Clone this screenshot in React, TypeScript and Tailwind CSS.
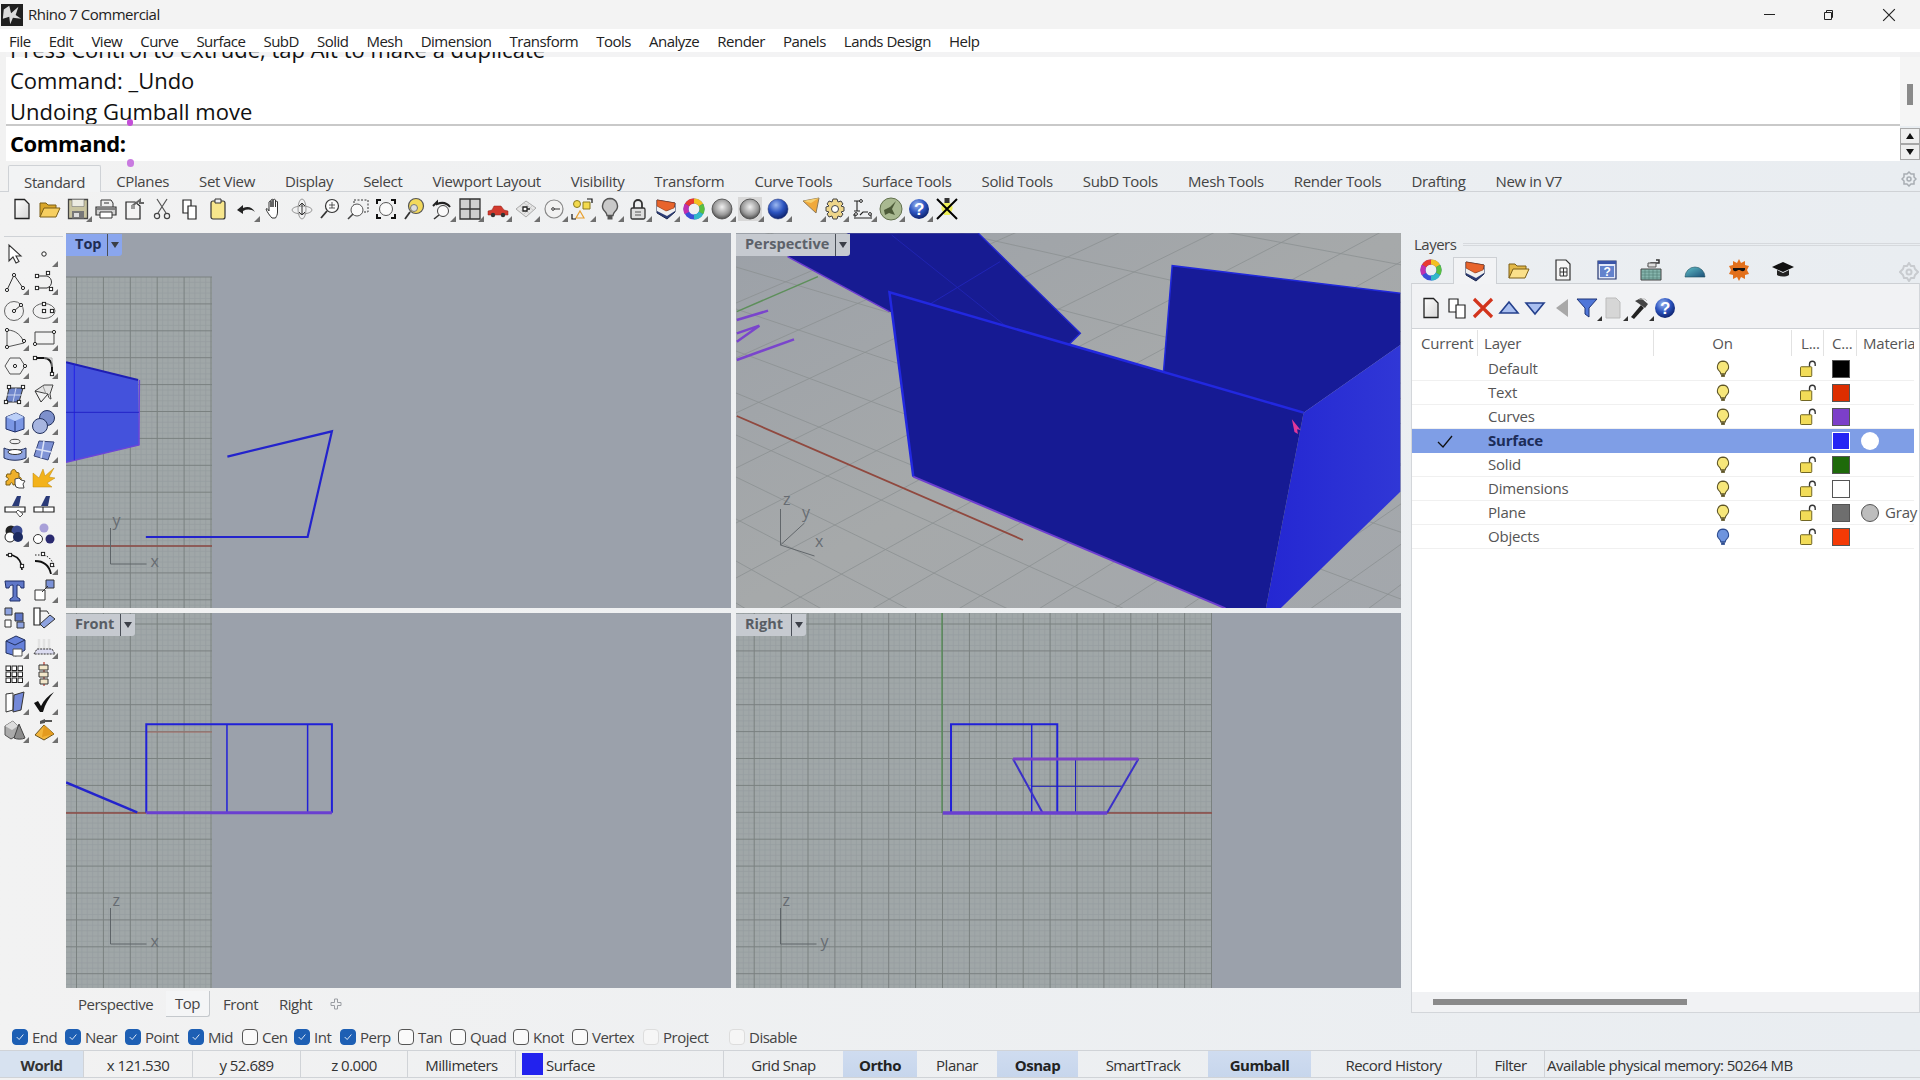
import React from "react";

const z7 = (pts: number[][], ox: number, oy: number) =>
	pts.map(([x, y]) => `${x / 2.306 + ox},${y / 3 + oy}`).join(" ");

// viewport drawings are measured from the left/top of each panel
const top = (pts: number[][]) => z7(pts, -6, -3);
const right = (pts: number[][]) => z7(pts, -7, -3);

function Icon({ children }: { children: React.ReactNode }) {
	return (
		<svg viewBox="0 0 24 24" className="w-[24px] h-[24px]">
			{children}
		</svg>
	);
}

function Tool({ children, fly, cls }: { children: React.ReactNode; fly?: boolean; cls?: string }) {
	return (
		<div className={`relative w-[28px] h-[28px] flex items-center justify-center shrink-0 ${cls ?? ""}`}>
			<Icon>{children}</Icon>
			{fly && (
				<span className="absolute right-[0px] bottom-[1px] w-0 h-0 border-l-[6px] border-l-transparent border-b-[6px] border-b-[#6f6f6f]" />
			)}
		</div>
	);
}

const wheel = (
	<>
		<circle cx="12" cy="12" r="8" fill="none" stroke="#3a4fd8" strokeWidth="5" />
		<path d="M12 4a8 8 0 0 1 7 4" fill="none" stroke="#f4c020" strokeWidth="5" />
		<path d="M19 8a8 8 0 0 1 0 8" fill="none" stroke="#58c040" strokeWidth="5" />
		<path d="M19 16a8 8 0 0 1-7 4" fill="none" stroke="#30b8c8" strokeWidth="5" />
		<path d="M5 8a8 8 0 0 1 7-4" fill="none" stroke="#e83a30" strokeWidth="5" />
		<path d="M5 16a8 8 0 0 1 0-8" fill="none" stroke="#c030b0" strokeWidth="5" />
	</>
);

const layersIcon = (
	<>
		<path d="M3 3l18 3v9l-8 7-10-6z" fill="#2c3d78" stroke="#1c2850" />
		<path d="M3 9l10 5 8-4v4l-8 5-10-5z" fill="#f0f0f0" />
		<path d="M3 3l18 3-1 5-8 3-9-5z" fill="#e8642c" stroke="#a04418" strokeWidth=".6" />
	</>
);

const help = (
	<>
		<circle cx="12" cy="12" r="10" fill="url(#gBlue)" />
		<text x="12" y="18" textAnchor="middle" fontSize="17" fontWeight="700" fill="#fff" fontFamily="Liberation Sans, sans-serif">?</text>
	</>
);

const bulb = (fill: string, line: string) => (
	<>
		<path d="M12 1.5a7.5 7.5 0 0 0-4.8 13.2c1 1 1.8 2.300 1.800 3.800h6c0-1.500.8-2.800 1.800-3.800A7.500 7.500 0 0 0 12 1.500z" fill={fill} stroke={line} strokeWidth="1.400" />
		<path d="M9.500 19h5v3.500h-5z" fill={line} />
	</>
);

const openLock = (
	<>
		<path d="M14 9V5.500a3.800 3.800 0 0 1 7.600 0V8" fill="none" stroke="#333" strokeWidth="1.800" />
		<rect x="2" y="9" width="15" height="13" rx="1" fill="#f2dc58" stroke="#6d6220" strokeWidth="1.300" />
	</>
);

const topTools: { el: React.ReactNode; fly?: boolean; cls?: string }[] = [
	{ el: <path d="M5 2.500h9.500L19 7v14.500H5z" fill="url(#gFace)" stroke="#222" strokeWidth="1.300" /> },
	{
		el: (
			<>
				<path d="M2 20V6h6l2 2h8v3" fill="#d9a62a" stroke="#7c5f16" />
				<path d="M2 20l4-9h16l-4 9z" fill="#f7cf60" stroke="#7c5f16" />
			</>
		),
	},
	{
		el: (
			<>
				<path d="M2.500 2.500h19v19h-19z" fill="#c9c4a0" stroke="#444" strokeWidth="1.300" />
				<path d="M6 2.500h12v7H6z" fill="#ecebe2" stroke="#777" strokeWidth=".6" />
				<path d="M6 14h12v7.500H6z" fill="#777" />
				<path d="M8 16h5v4H8z" fill="#ddd" />
			</>
		),
		fly: true,
	},
	{
		el: (
			<>
				<path d="M7 9V3h10l2 3v4" fill="#eee" stroke="#333" />
				<path d="M2 10h20v8H2z" fill="#d2d2d2" stroke="#333" strokeWidth="1.200" />
				<path d="M6 15h12v6H6z" fill="#fff" stroke="#333" />
				<path d="M3 12h18M10 6h5" stroke="#333" />
			</>
		),
	},
	{
		el: (
			<>
				<path d="M4 5h9l5 4v13H4z" fill="#f4f4f4" stroke="#222" strokeWidth="1.200" />
				<path d="M10 9l8-6v3h4" fill="none" stroke="#666" strokeWidth="2" />
				<path d="M9 8h4v4H9z" fill="#999" />
			</>
		),
	},
	{
		el: (
			<>
				<path d="M7 2l9 14M17 2L8 16" stroke="#555" strokeWidth="1.200" />
				<circle cx="7" cy="19" r="2.600" fill="none" stroke="#444" strokeWidth="1.200" />
				<circle cx="17" cy="19" r="2.600" fill="none" stroke="#444" strokeWidth="1.200" />
			</>
		),
	},
	{
		el: (
			<>
				<path d="M5 3h8v13H5z" fill="#fff" stroke="#222" strokeWidth="1.200" />
				<path d="M10 9h8v13h-8z" fill="#fff" stroke="#222" strokeWidth="1.200" />
			</>
		),
	},
	{
		el: (
			<>
				<rect x="5" y="4" width="14" height="18" rx="2" fill="#f7e68c" stroke="#333" strokeWidth="1.200" />
				<path d="M9 2h6v4H9z" fill="#eee" stroke="#333" />
			</>
		),
	},
	{
		el: <path d="M3 13l6-5v3c5-2 9-1 12 4-4-3-8-3-12-1v3z" fill="#222" />,
		fly: true,
	},
	{
		el: (
			<path
				transform="translate(2 0)"
				d="M8 21c-2-2-5-6-6-9 1-1 2 0 3 2V5c1-1.500 2-1 2 0v5V3c1-1 2-1 2 0v7V3c1-1 2-1 2.500 0v7V5c1-1 2-1 2 0v10c0 3-1 4-2 6z"
				fill="#fff"
				stroke="#333"
				strokeWidth="1"
			/>
		),
	},
	{
		el: (
			<>
				<ellipse cx="12" cy="13" rx="10" ry="4" fill="none" stroke="#999" />
				<ellipse cx="12" cy="12" rx="4" ry="10" fill="none" stroke="#999" />
				<path d="M12 6v12M9 9l3-3 3 3M9 15l3 3 3-3" fill="none" stroke="#333" />
			</>
		),
	},
	{
		el: (
			<>
				<circle cx="14" cy="9" r="6.500" fill="#fafafa" stroke="#333" strokeWidth="1.200" />
				<path d="M9 14l-6 7" stroke="#333" strokeWidth="1.800" />
				<path d="M11 8h6M14 5v6M11 11h6" stroke="#333" strokeWidth=".8" />
			</>
		),
	},
	{
		el: (
			<>
				<path d="M8 3h14v12H8z" fill="none" stroke="#333" strokeDasharray="2 1.500" />
				<circle cx="11" cy="13" r="6" fill="#fafafa" stroke="#555" />
				<path d="M7 17l-5 5" stroke="#444" strokeWidth="1.600" />
			</>
		),
	},
	{
		el: (
			<>
				<circle cx="12" cy="12" r="6.500" fill="#fafafa" stroke="#555" />
				<path d="M3 7V3h4M17 3h4v4M3 17v4h4M17 21h4v-4" fill="none" stroke="#111" strokeWidth="2" />
			</>
		),
	},
	{
		el: (
			<>
				<circle cx="14" cy="9" r="7.500" fill="#f3d95c" stroke="#555" strokeWidth="1.200" />
				<circle cx="12" cy="11" r="3.500" fill="#ddd" stroke="#777" />
				<path d="M8 15l-5 7" stroke="#333" strokeWidth="1.800" />
			</>
		),
	},
	{
		el: (
			<>
				<path d="M3 9l4-4v2c5-2 10-1 13 3" fill="none" stroke="#222" strokeWidth="2" />
				<circle cx="13" cy="14" r="5.500" fill="#fafafa" stroke="#444" />
				<path d="M9 18l-5 4" stroke="#333" strokeWidth="1.600" />
			</>
		),
		fly: true,
	},
	{
		el: (
			<>
				<path d="M2 2h20v20H2z" fill="#cfcfcf" stroke="#333" strokeWidth="1.300" />
				<path d="M12 2v20M2 12h20" stroke="#333" strokeWidth="1.300" />
			</>
		),
		fly: true,
	},
	{
		el: (
			<>
				<path d="M2 14l4-1 2-4h7l3 4 4 1v4H2z" fill="#d23a2e" stroke="#8d2018" strokeWidth=".5" />
				<circle cx="7" cy="18" r="2.200" fill="#333" />
				<circle cx="17" cy="18" r="2.200" fill="#333" />
			</>
		),
		fly: true,
	},
	{
		el: (
			<>
				<path d="M2 12l10-8 10 7-10 9z" fill="#e6e6e6" stroke="#aaa" />
				<path d="M6 9l10 8M10 6l9 7M16 6L7 14M19 8l-9 9" stroke="#bbb" strokeWidth=".6" />
				<path d="M9 10h4v4H9z" fill="#fff" stroke="#222" strokeWidth="1.300" />
				<path d="M13 12h3" stroke="#222" strokeWidth="1.500" />
			</>
		),
		fly: true,
	},
	{
		el: (
			<>
				<circle cx="12" cy="12" r="9" fill="#f2f2f2" stroke="#888" strokeWidth="1.200" />
				<circle cx="11" cy="12" r="1.300" fill="#fff" stroke="#333" />
				<path d="M12 12h6" stroke="#333" />
			</>
		),
		fly: true,
	},
	{
		el: (
			<>
				<circle cx="7" cy="7" r="3.500" fill="#f3da4d" stroke="#8a7a20" />
				<path d="M13 5h7v7h-7z" fill="#f3da4d" stroke="#8a7a20" />
				<path d="M10 14l4 7H6z" fill="none" stroke="#e8a030" strokeWidth="1.200" />
				<path d="M17 2h5v4M2 17v5h4" fill="none" stroke="#111" strokeWidth="1.200" />
			</>
		),
		fly: true,
	},
	{ el: bulb("#c9c9c9", "#555"), fly: true },
	{
		el: (
			<>
				<path d="M8 11V7a4 4 0 0 1 8 0v4" fill="none" stroke="#333" strokeWidth="1.800" />
				<rect x="5" y="11" width="14" height="11" rx="1.500" fill="#dedede" stroke="#333" strokeWidth="1.300" />
				<path d="M9 15h6M9 18h6" stroke="#555" />
			</>
		),
		fly: true,
	},
	{ el: layersIcon, fly: true },
	{ el: wheel, fly: true },
	{ el: <circle cx="12" cy="12" r="10" fill="url(#gSphere)" stroke="#444" strokeWidth=".8" />, fly: true },
	{
		el: (
			<>
				<path d="M0 0h24v24H0z" fill="#d8d8d8" />
				<circle cx="12" cy="12" r="10" fill="url(#gSphere)" stroke="#444" strokeWidth=".8" />
			</>
		),
		fly: true,
	},
	{ el: <circle cx="12" cy="12" r="10" fill="url(#gBlue)" stroke="#1a2a70" strokeWidth=".5" />, fly: true },
	{
		el: (
			<>
				<path d="M3 4l16-3-3 15z" fill="#f0a93c" stroke="#8d7a5a" />
				<path d="M3 4l16-3-8 5z" fill="#f6d070" />
			</>
		),
		fly: true,
		cls: "ml-[6px]",
	},
	{
		el: (
			<>
				<path
					d="M10 2h4l1 3 3-1 2 3-2 2 3 1v4l-3 1 2 2-2 3-3-1-1 3h-4l-1-3-3 1-2-3 2-2-3-1v-4l3-1-2-2 2-3 3 1z"
					fill="#eed58a"
					stroke="#444"
				/>
				<circle cx="12" cy="12" r="3.500" fill="#fff" stroke="#444" />
			</>
		),
		fly: true,
		cls: "-ml-[5px]",
	},
	{
		el: (
			<>
				<path d="M3 4h6M3 14h6M6 4v10M2 18h2v4M20 18v4M5 21h14M9 18l3-3h5" fill="none" stroke="#222" strokeWidth="1.100" />
				<circle cx="10" cy="4" r="1.400" fill="#fff" stroke="#222" />
				<circle cx="5" cy="17" r="1.400" fill="#fff" stroke="#222" />
				<circle cx="19" cy="17" r="1.400" fill="#fff" stroke="#222" />
			</>
		),
		fly: true,
	},
	{
		el: (
			<>
				<circle cx="12" cy="12" r="11" fill="#a9b991" stroke="#62714d" />
				<path d="M5 13l6-3 6-6-4 8 3 6-6-2-4 2z" fill="#4c5a38" />
			</>
		),
		fly: true,
	},
	{ el: help, fly: true },
	{
		el: (
			<>
				<path d="M12 5a6 6 0 0 0-4 10c1 1 1 2 1 3h6c0-1 0-2 1-3a6 6 0 0 0-4-10z" fill="#eef05a" />
				<path d="M9.500 1h5v5h-5z" fill="#333" />
				<path d="M2 2l20 20M22 2L2 22" stroke="#000" strokeWidth="2" />
			</>
		),
	},
];

const pt = (x: number, y: number, r = 1.600) => <circle cx={x} cy={y} r={r} fill="#fff" stroke="#222" strokeWidth="1" />;
const box = (x: number, y: number) => <rect x={x - 1.600} y={y - 1.600} width="3.200" height="3.200" fill="#fff" stroke="#222" strokeWidth="1" />;

const leftTools: { el: React.ReactNode; fly?: boolean }[] = [
	{ el: <path d="M6 3v16l4-4 3 6 3-1.500-3-5.500h5z" fill="#fff" stroke="#333" strokeWidth="1.100" /> },
	{ el: pt(12, 12, 2.200), fly: true },
	{
		el: (
			<>
				<path d="M4 20L11 5l9 13" fill="none" stroke="#333" />
				{pt(4, 20)}
				{pt(11, 5)}
				{pt(20, 18)}
			</>
		),
		fly: true,
	},
	{
		el: (
			<>
				<path d="M5 6h10c6 2 6 10 0 12H5" fill="none" stroke="#333" />
				{box(5, 6)}
				{box(16, 3)}
				{box(5, 18)}
				{box(19, 19)}
			</>
		),
		fly: true,
	},
	{
		el: (
			<>
				<circle cx="11" cy="13" r="9.500" fill="none" stroke="#666" />
				<path d="M11 13l7-6" stroke="#333" />
				{pt(11, 13)}
				{pt(18, 7)}
			</>
		),
		fly: true,
	},
	{
		el: (
			<>
				<ellipse cx="12" cy="13" rx="11" ry="7.500" fill="none" stroke="#666" />
				{box(12, 6)}
				{box(12, 13)}
				{box(20, 13)}
			</>
		),
		fly: true,
	},
	{
		el: (
			<>
				<path d="M4 4c9 0 15 6 17 13L4 21z" fill="none" stroke="#555" />
				{pt(4, 4)}
				{pt(21, 15)}
				{pt(4, 21)}
			</>
		),
		fly: true,
	},
	{
		el: (
			<>
				<path d="M3 6h19v12H3z" fill="none" stroke="#444" />
				{pt(3, 18)}
				{pt(22, 6)}
			</>
		),
		fly: true,
	},
	{
		el: (
			<>
				<path d="M7 4h10l5 8-5 8H7l-5-8z" fill="none" stroke="#555" />
				{pt(12, 12)}
				{pt(22, 12)}
			</>
		),
		fly: true,
	},
	{
		el: (
			<>
				<path d="M3 4h9c5 0 8 4 8 9v7" fill="none" stroke="#111" strokeWidth="2" />
				<path d="M12 4h8v9" fill="none" stroke="#aaa" />
				{box(3, 4)}
				{box(20, 20)}
			</>
		),
		fly: true,
	},
	{
		el: (
			<>
				<path d="M6 6h14l-4 14H3z" fill="#6f86cc" stroke="#333" />
				<path d="M13 6l-3 14M4 13h15" stroke="#ccd6f0" />
				{box(6, 5)}
				{box(20, 5)}
				{box(3, 20)}
				{box(16, 20)}
			</>
		),
		fly: true,
	},
	{
		el: (
			<>
				<path d="M3 9l9-6h9l-3 9 1 5c-2 0-3-3-3-5z" fill="#e4e4e4" stroke="#444" />
				<path d="M3 9l6 11 7-8" fill="none" stroke="#333" />
				<path d="M11 4l3 8" stroke="#999" />
			</>
		),
		fly: true,
	},
	{
		el: (
			<>
				<path d="M3 7l10-4 8 4v12l-9 3-9-3z" fill="#7b97e4" stroke="#1e2e68" />
				<path d="M3 7l9 4 9-4-8-4z" fill="#bcd0f8" />
				<path d="M12 11v11" stroke="#1e2e68" />
			</>
		),
		fly: true,
	},
	{
		el: (
			<>
				<circle cx="15" cy="8" r="7.500" fill="#7d90cc" stroke="#22305c" />
				<circle cx="8" cy="16" r="7.500" fill="#a7b5e0" stroke="#22305c" />
			</>
		),
		fly: true,
	},
	{
		el: (
			<>
				<ellipse cx="12" cy="3.500" rx="5" ry="2.200" fill="none" stroke="#444" />
				<path d="M1 10c6 3 16 3 22 0v10c-6 3-16 3-22 0z" fill="#8ea3e0" stroke="#22305c" />
				<ellipse cx="12" cy="14" rx="7" ry="2.500" fill="#fff" stroke="#333" />
			</>
		),
		fly: true,
	},
	{
		el: (
			<>
				<path d="M7 3l15 1-6 18L2 18z" fill="#7f93d6" stroke="#38467a" />
				<path d="M12 3L9 20M4 11l15 3" stroke="#dde4f8" strokeWidth="1.500" />
			</>
		),
		fly: true,
	},
	{
		el: (
			<>
				<path d="M4 8h4c-1-5 5-6 5-2l3 1v4c3 0 3 4 0 4v3l-6 1c0-3-3-3-3 0H3v-4c3 0 3-4 0-4z" fill="#efb02a" stroke="#7a5e14" />
				<path d="M12 13l4-1 2 2 4 1-2 3 1 4h-5l-3-1-1-3z" fill="#fff" stroke="#444" />
			</>
		),
	},
	{
		el: <path d="M1 21V7l6 5 4-9 2 7 9-8-5 9 6 1-8 5 5 4z" fill="#f3b21a" stroke="#b8860c" strokeWidth=".5" />,
	},
	{
		el: (
			<>
				<path d="M14 2h4l-2 10h-7z" fill="#2a3a78" />
				<path d="M2 13h20v5H2z" fill="#fff" stroke="#222" strokeWidth="1.200" />
				<path d="M15 16l5 4-3 3-4-5z" fill="#fff" stroke="#555" />
			</>
		),
	},
	{
		el: (
			<>
				<path d="M14 2h4l-2 10h-7z" fill="#2a3a78" />
				<path d="M2 13h20v5H2z" fill="#fff" stroke="#222" strokeWidth="1.200" />
				<path d="M11 13v5" stroke="#222" />
			</>
		),
	},
	{
		el: (
			<>
				<circle cx="8" cy="9" r="5.500" fill="#222" />
				<circle cx="14" cy="9" r="5.500" fill="#3a4a90" />
				<circle cx="7" cy="15" r="5" fill="#fff" stroke="#222" />
				<circle cx="15" cy="15" r="5" fill="#1c2a60" />
			</>
		),
		fly: true,
	},
	{
		el: (
			<>
				<circle cx="12" cy="6" r="4.500" fill="#a8a0d8" />
				<circle cx="6" cy="17" r="4.500" fill="#fff" stroke="#333" />
				<circle cx="18" cy="17" r="4.500" fill="#2a2a70" />
			</>
		),
	},
	{
		el: (
			<>
				<path d="M3 5h6c6 2 10 7 10 15" fill="none" stroke="#111" strokeWidth="1.600" />
				{box(7, 5)}
				{box(19, 16)}
			</>
		),
	},
	{
		el: (
			<>
				<path d="M3 11c8 0 14 4 16 13" fill="none" stroke="#111" strokeWidth="1.800" />
				<path d="M3 5h8c6 1 10 6 11 12" fill="none" stroke="#222" strokeDasharray="1.500 1.500" />
				{box(11, 4)}
				{box(20, 15)}
			</>
		),
		fly: true,
	},
	{
		el: <path d="M2 3h19v7h-3c0-2-2-3-4-3v12l3 2v2H7v-2l3-2V7c-2 0-4 1-4 3H3z" fill="#5f77c8" stroke="#1e2e68" />,
	},
	{
		el: (
			<>
				<path d="M3 12h10v10H3z" fill="#fff" stroke="#333" />
				<path d="M14 2h8v8h-8z" fill="#7b92d8" stroke="#333" />
				<path d="M10 14l6-6" stroke="#333" />
			</>
		),
		fly: true,
	},
	{
		el: (
			<>
				<path d="M2 2h7v7H2z" fill="#8ea3e0" stroke="#333" />
				<path d="M12 7h8v8h-8z" fill="#5f77c8" stroke="#333" />
				<path d="M2 14h6v7H2z" fill="#fff" stroke="#333" />
				<path d="M14 16h7v6h-7z" fill="#8ea3e0" stroke="#333" />
			</>
		),
	},
	{
		el: (
			<>
				<path d="M2 2h6v17H2z" fill="#fff" stroke="#222" strokeWidth="1.200" />
				<path d="M8 5h7l2 3" fill="none" stroke="#333" />
				<path d="M18 9l5 4-11 9-4-4z" fill="#8ea3e0" stroke="#333" />
			</>
		),
	},
	{
		el: (
			<>
				<path d="M3 7l10-5 9 4v10l-9 6-10-3z" fill="#6580da" stroke="#22305c" />
				<path d="M3 7l9 4 10-5" fill="none" stroke="#22305c" />
				<path d="M10 15h9v7H10z" fill="#fff" stroke="#555" />
			</>
		),
		fly: true,
	},
	{
		el: (
			<>
				<path d="M7 5v10M12 5v10M17 5v10" stroke="#e2e2e2" strokeWidth="2.500" />
				<path d="M2 20l3-5h15l3 5z" fill="#dcdcf0" stroke="#333" strokeDasharray="2 1" />
			</>
		),
		fly: true,
	},
	{
		el: (
			<>
				{[3, 9, 15].map((y) =>
					[3, 9, 15].map((x) => <rect key={`${x}-${y}`} x={x} y={y + 1} width="4.500" height="4.500" fill="#fff" stroke="#222" />),
				)}
			</>
		),
		fly: true,
	},
	{
		el: (
			<>
				<path d="M12 0v24" stroke="#c0392b" strokeWidth="1.200" />
				<path d="M7 3h9v5H7zM7 10h9v5H7zM8 17h8v5H8z" fill="#f3e7ca" stroke="#333" />
			</>
		),
		fly: true,
	},
	{
		el: (
			<>
				<path d="M3 4l7-1v17l-7 2z" fill="#fff" stroke="#333" />
				<path d="M11 5l10-3-3 18-8 2z" fill="#7489d8" stroke="#333" />
			</>
		),
		fly: true,
	},
	{ el: <path d="M2 13l4-2 3 5c3-6 7-10 13-14-5 6-9 12-11 20h-3z" fill="#111" />, fly: true },
	{
		el: (
			<>
				<path d="M2 8l8-5 5 5v9l-7 4-6-4z" fill="#aaa" stroke="#555" />
				<path d="M2 8l7 4 6-4-5-5z" fill="#ddd" />
				<path d="M16 6l6 14a7 3 0 0 1-11 0z" fill="#8c8c8c" stroke="#444" />
			</>
		),
		fly: true,
	},
	{
		el: (
			<>
				<path d="M12 7L3 17l9 5 10-6z" fill="#f2b53c" stroke="#6a5420" />
				<path d="M12 7l-2 12 12-3z" fill="#e49b1f" />
				<path d="M8 3l5-2v4l-5 1zM13 2h7v2h-7z" fill="#555" />
			</>
		),
		fly: true,
	},
];

function Grid({ w, h, y0, top0, xs0 = 10.5 }: { w: number; h: number; y0: number; top0: number; xs0?: number }) {
	const minor: React.ReactNode[] = [];
	const major: React.ReactNode[] = [];
	for (let i = -5; i * 5.38 + xs0 <= w; i++) {
		const x = i * 5.38 + xs0;
		if (x < 0) continue;
		(i % 5 === 0 ? major : minor).push(<line key={i} x1={x} y1={top0} x2={x} y2={h} />);
	}
	for (let i = -5; y0 + i * 5.38 < h; i++) {
		const y = y0 + i * 5.38;
		if (y < top0) continue;
		(i % 5 === 0 ? major : minor).push(<line key={`h${i}`} x1={0} y1={y} x2={w} y2={y} />);
	}
	return (
		<>
			<rect x="0" y={top0} width={w} height={h - top0} fill="#a0a7a8" />
			<g stroke="#979ea0" strokeWidth=".7">{minor}</g>
			<g stroke="#7a8180" strokeWidth="1">{major}</g>
		</>
	);
}

function Axes({ x, y, v, h }: { x: number; y: number; v: string; h: string }) {
	return (
		<>
			<path d={`M${x} ${y - 36}V${y}H${x + 36}`} fill="none" stroke="#5e6468" />
			<text x={x + 2} y={y - 38} fontSize="16" fill="#676c72">{v}</text>
			<text x={x + 40} y={y + 3} fontSize="16" fill="#676c72">{h}</text>
		</>
	);
}

function Label({ text, on, sep }: { text: string; on?: boolean; sep: string }) {
	return (
		<div
			className={`absolute left-0 top-[1px] flex items-center h-[22px] pl-[9px] rounded-br-[3px] text-[14.5px] font-bold tracking-[0px] ${
				on ? "bg-[#8aa6ee] text-[#1f2d52]" : "bg-[#c6cad0] text-[#585d64]"
			}`}
		>
			<span className={`pb-[2px] ${sep}`}>{text}</span>
			<span className="w-[1px] h-[22px] bg-[#4a4f58]" />
			<span className="mx-[3px] w-0 h-0 border-x-[4.5px] border-x-transparent border-t-[6px] border-t-[#3b3f47]" />
		</div>
	);
}

function TopView() {
	return (
		<svg className="absolute inset-0 w-full h-full">
			<Grid w={146} h={375} y0={44} top0={44} />
			<line x1="0" y1="313" x2="146" y2="313" stroke="#8e4a44" strokeWidth="1.500" />
			<polygon points={top([[14, 397], [180, 450], [183, 645], [14, 697]])} fill="#4452dc" />
			<polyline points={top([[14, 397], [180, 450]])} stroke="#1e1eb4" strokeWidth="2" fill="none" />
			<polyline points={top([[14, 697], [182, 645], [183, 450]])} stroke="#6a45d8" strokeWidth="1.500" fill="none" />
			<polyline points={top([[33, 403], [33, 690]])} stroke="#2222e6" fill="none" />
			<polyline points={top([[14, 547], [182, 547]])} stroke="#2222c8" fill="none" />
			<polyline points={top([[386, 680], [627, 604], [571, 921], [198, 921]])} stroke="#2323cc" strokeWidth="2.200" fill="none" />
			<Axes x={44.5} y={331} v="y" h="x" />
		</svg>
	);
}

function FrontView() {
	return (
		<svg className="absolute inset-0 w-full h-full">
			<Grid w={146} h={375} y0={11} top0={0} />
			<line x1="0" y1="200" x2="80" y2="200" stroke="#8e4a44" strokeWidth="1.500" />
			<line x1="80" y1="119" x2="146" y2="119" stroke="#a56a62" />
			<polyline points={top([[14, 517], [178, 607]])} stroke="#2323cc" strokeWidth="2.500" fill="none" />
			<polyline points={top([[199, 608], [199, 343], [627, 343], [627, 608]])} stroke="#2020d8" strokeWidth="2" fill="none" />
			<polyline points={top([[385, 343], [385, 608]])} stroke="#2020d8" strokeWidth="1.500" fill="none" />
			<polyline points={top([[571, 343], [571, 608]])} stroke="#2020d8" strokeWidth="1.500" fill="none" />
			<polyline points={top([[199, 608], [627, 608]])} stroke="#6a3fd0" strokeWidth="3" fill="none" />
			<Axes x={44.5} y={331} v="z" h="x" />
		</svg>
	);
}

function RightView() {
	return (
		<svg className="absolute inset-0 w-full h-full">
			<Grid w={476} h={375} y0={11} top0={0} xs0={18.2} />
			<line x1="206" y1="0" x2="206" y2="200" stroke="#4d8a4d" strokeWidth="1.200" />
			<line x1="371" y1="200" x2="476" y2="200" stroke="#8e4a44" strokeWidth="1.500" />
			<polyline points={right([[512, 608], [512, 343], [757, 343], [757, 608]])} stroke="#2020d8" strokeWidth="2" fill="none" />
			<polyline points={right([[698, 343], [698, 608]])} stroke="#2020d8" strokeWidth="1.500" fill="none" />
			<polyline points={right([[799, 447], [799, 608]])} stroke="#2020c0" fill="none" />
			<polyline points={right([[698, 529], [905, 529]])} stroke="#2020c0" fill="none" />
			<polyline points={right([[655, 447], [723, 608]])} stroke="#3a30c8" strokeWidth="2" fill="none" />
			<polyline points={right([[944, 447], [872, 608]])} stroke="#3a30c8" strokeWidth="2" fill="none" />
			<polyline points={right([[655, 447], [944, 447]])} stroke="#7a40c8" strokeWidth="3" fill="none" />
			<polyline points={right([[493, 609], [872, 609]])} stroke="#6a3fd0" strokeWidth="3.500" fill="none" />
			<Axes x={44.5} y={331} v="z" h="y" />
		</svg>
	);
}

function PerspectiveView() {
	const lines: React.ReactNode[] = [];
	// hand-fitted ground grid: slope changes with the offset so the lines fan out
	for (let c = -260; c < 480; c += 42) {
		const slope = 0.22 + (c + 54) * 0.00089;
		lines.push(<line key={`a${c}`} x1={0} y1={c} x2={665} y2={c + slope * 665} />);
	}
	for (let c = -40; c < 1100; c += 55) {
		const slope = -0.43 - (c - 79) * 0.0004;
		lines.push(<line key={`b${c}`} x1={0} y1={c} x2={665} y2={c + slope * 665} />);
	}
	return (
		<svg className="absolute inset-0 w-full h-full">
			<defs>
				<linearGradient id="gPersp" x1="0" y1="0" x2="1" y2="1">
					<stop offset="0" stopColor="#9ca1a8" />
					<stop offset=".5" stopColor="#a6a9aa" />
					<stop offset="1" stopColor="#a3a7ac" />
				</linearGradient>
				<linearGradient id="gSide" x1="0" y1="0" x2="1" y2="0">
					<stop offset="0" stopColor="#2427d2" />
					<stop offset="1" stopColor="#3037d6" />
				</linearGradient>
			</defs>
			<rect width="100%" height="100%" fill="url(#gPersp)" />
			<g stroke="#8b9192" strokeWidth=".8">{lines}</g>
			<polyline points={right([[18, 245], [205, 140]])} stroke="#5d8f5a" strokeWidth="1.500" fill="none" />
			<polyline points={right([[18, 558], [678, 930]])} stroke="#90493f" strokeWidth="1.800" fill="none" />
			<polygon points={right([[135, 80], [275, 10], [575, 10], [810, 310], [785, 342], [370, 245]])} fill="#171b92" />
			<polyline points={right([[135, 80], [370, 245]])} stroke="#6d3dd0" strokeWidth="1.500" fill="none" />
			<polyline points={right([[575, 10], [810, 310], [785, 342]])} stroke="#2227d0" strokeWidth="1.500" fill="none" />
			<polyline points={right([[375, 15], [640, 290]])} stroke="#2024b0" fill="none" />
			<polyline points={right([[460, 225], [625, 95]])} stroke="#2024b8" fill="none" />
			<polygon points={right([[1022, 107], [1548, 190], [1548, 345], [1325, 548], [1002, 425]])} fill="#171b98" />
			<polyline points={right([[1002, 425], [1022, 107], [1548, 190]])} stroke="#2028dc" strokeWidth="1.500" fill="none" />
			<polygon points={right([[1325, 548], [1548, 345], [1548, 785], [1272, 1135], [1238, 1135]])} fill="url(#gSide)" />
			<polygon points={right([[370, 187], [1325, 548], [1238, 1135], [1145, 1135], [425, 740]])} fill="#161a93" />
			<polyline points={right([[425, 740], [370, 187], [1325, 548]])} stroke="#2228e0" strokeWidth="2.500" fill="none" />
			<polyline points={right([[425, 740], [1145, 1135]])} stroke="#6d3dd0" strokeWidth="2" fill="none" />
			<polyline points={right([[18, 270], [90, 242]])} stroke="#7a45cc" strokeWidth="2.500" fill="none" />
			<polyline points={right([[18, 310], [70, 287], [18, 335]])} stroke="#7a45cc" strokeWidth="2.500" fill="none" />
			<polyline points={right([[18, 390], [150, 328]])} stroke="#7a45cc" strokeWidth="2.500" fill="none" />
			<polygon points={right([[1298, 568], [1318, 600], [1310, 598], [1312, 612], [1304, 606]])} fill="#e0389a" />
			<path d="M45 312V276M45 312l24-22M45 312l34 11" fill="none" stroke="#62676b" transform="translate(-.5 0)" />
			<text x="47" y="272" fontSize="16" fill="#676c72">z</text>
			<text x="66" y="285" fontSize="16" fill="#676c72">y</text>
			<text x="79" y="314" fontSize="16" fill="#676c72">x</text>
		</svg>
	);
}

const layers = [
	{ name: "Default", color: "bg-[#000000]" },
	{ name: "Text", color: "bg-[#dd2e00]" },
	{ name: "Curves", color: "bg-[#7c3fc9]" },
	{ name: "Surface", color: "bg-[#2424f4]", current: true },
	{ name: "Solid", color: "bg-[#1e6a0a]" },
	{ name: "Dimensions", color: "bg-[#ffffff]" },
	{ name: "Plane", color: "bg-[#6e6e6e]", mat: "Gray" },
	{ name: "Objects", color: "bg-[#f43a06]", off: true },
];

const osnaps = [
	{ t: "End", on: true, w: "w-[53px]" },
	{ t: "Near", on: true, w: "w-[60px]" },
	{ t: "Point", on: true, w: "w-[63px]" },
	{ t: "Mid", on: true, w: "w-[54px]" },
	{ t: "Cen", w: "w-[52px]" },
	{ t: "Int", on: true, w: "w-[46px]" },
	{ t: "Perp", on: true, w: "w-[58px]" },
	{ t: "Tan", w: "w-[52px]" },
	{ t: "Quad", w: "w-[63px]" },
	{ t: "Knot", w: "w-[59px]" },
	{ t: "Vertex", w: "w-[71px]" },
	{ t: "Project", dim: true, w: "w-[86px]" },
	{ t: "Disable", dim: true, w: "w-[90px]" },
];

const status = [
	{ t: "World", w: "w-[84px]", on: true },
	{ t: "x 121.530", w: "w-[109px]" },
	{ t: "y 52.689", w: "w-[108px]" },
	{ t: "z 0.000", w: "w-[107px]" },
	{ t: "Millimeters", w: "w-[108px]" },
];

const status2 = [
	{ t: "Grid Snap", w: "w-[119px]" },
	{ t: "Ortho", w: "w-[74px]", on: true },
	{ t: "Planar", w: "w-[80px]" },
	{ t: "Osnap", w: "w-[81px]", on: true },
	{ t: "SmartTrack", w: "w-[130px]" },
	{ t: "Gumball", w: "w-[103px]", on: true },
	{ t: "Record History", w: "w-[166px]" },
	{ t: "Filter", w: "w-[68px]" },
];

const menus = ["File", "Edit", "View", "Curve", "Surface", "SubD", "Solid", "Mesh", "Dimension", "Transform", "Tools", "Analyze", "Render", "Panels", "Lands Design", "Help"];
const tabs = ["Standard", "CPlanes", "Set View", "Display", "Select", "Viewport Layout", "Visibility", "Transform", "Curve Tools", "Surface Tools", "Solid Tools", "SubD Tools", "Mesh Tools", "Render Tools", "Drafting", "New in V7"];

const panelTabs: React.ReactNode[] = [
	wheel,
	layersIcon,
	<>
		<path d="M2 20V6h6l2 2h9v3" fill="#e2b848" stroke="#7c5f16" />
		<path d="M2 20l4-9h16l-4 9z" fill="#fbe08a" stroke="#7c5f16" />
	</>,
	<>
		<path d="M5 2h10l4 4v16H5z" fill="#f6f6f6" stroke="#333" strokeWidth="1.200" />
		<path d="M9 10h7v8H9zM12.500 10v8M9 14h7" fill="none" stroke="#333" />
	</>,
	<>
		<path d="M3 3h18v18H3z" fill="#e2e8f8" stroke="#24356e" strokeWidth="1.200" />
		<path d="M3 3h18v3H3z" fill="#3a55a8" />
		<path d="M5 8h14v11H5z" fill="#6382cc" />
		<text x="12" y="18" textAnchor="middle" fontSize="12" fontWeight="700" fill="#fff" fontFamily="Liberation Sans, sans-serif">?</text>
	</>,
	<>
		<path d="M2 11h20v11H2z" fill="#86b5ad" stroke="#444" />
		<path d="M2 14h20M2 17h20M2 20h20M6 11v11M10 11v11M14 11v11M18 11v11" stroke="#4d7a74" strokeWidth=".6" />
		<path d="M9 8l3-3h8v-3h-3" fill="none" stroke="#333" strokeWidth="1.500" />
		<path d="M9 5h8v4H9z" fill="#ddd" stroke="#555" />
	</>,
	<path d="M2 19a10 10 0 0 1 20 0z" fill="url(#gTeal)" stroke="#1c4f60" strokeWidth=".6" />,
	<>
		<path d="M12 1l2 4 4-2v4l4 1-2 4 2 4-4 1v4l-4-2-2 4-2-4-4 2v-4l-4-1 2-4-2-4 4-1V3l4 2z" fill="#e2701c" />
		<path d="M6 10h12v2c-2 2-4 1-5 0h-2c-1 1-3 2-5 0z" fill="#111" />
	</>,
	<>
		<path d="M1 9l11-5 11 5-11 5z" fill="#111" />
		<path d="M6 12v5c3 2 9 2 12 0v-5l-6 3z" fill="#222" />
	</>,
];

const panelTools: { el: React.ReactNode; fly?: boolean }[] = [
	{ el: <path d="M5 2.500h9.500L19 7v14.500H5z" fill="url(#gFace)" stroke="#222" strokeWidth="1.300" /> },
	{
		el: (
			<>
				<path d="M4 3h9v13H4z" fill="#fff" stroke="#222" strokeWidth="1.200" />
				<path d="M11 9h9v13h-9z" fill="#fff" stroke="#222" strokeWidth="1.200" />
			</>
		),
	},
	{ el: <path d="M3 3l18 18M21 3L3 21" stroke="#d2341c" strokeWidth="3.200" /> },
	{ el: <path d="M12 6l9 11H3z" fill="#a9bff0" stroke="#24408c" strokeWidth="1.600" /> },
	{ el: <path d="M12 18L3 7h18z" fill="#a9bff0" stroke="#24408c" strokeWidth="1.600" /> },
	{ el: <path d="M19 3v18L7 12z" fill="#a8a8a8" /> },
	{ el: <path d="M2 3h20l-8 9v9l-4-3v-6z" fill="#4f76d8" stroke="#1f3477" />, fly: true },
	{ el: <path d="M5 2h10l4 4v16H5z" fill="#d6d6d6" stroke="#bbb" />, fly: true },
	{
		el: (
			<>
				<path d="M4 21L14 9l3 3L7 23z" fill="#222" />
				<path d="M8 5l6-3 7 6-3 4-7-5z" fill="#444" />
				<path d="M12 3h6l2 2" fill="none" stroke="#bbb" />
			</>
		),
		fly: true,
	},
	{ el: help },
];

export default function App() {
	return (
		<div className="relative w-[1920px] h-[1080px] overflow-hidden flex flex-col bg-gradient-to-r from-[#f2f2f2] to-[#e9edf1] text-[15px] text-[#333] tracking-[-0.5px] [font-family:'Open_Sans',sans-serif]">
			<svg className="absolute w-0 h-0">
				<defs>
					<linearGradient id="gFace" x1="0" y1="0" x2="1" y2="1">
						<stop offset="0" stopColor="#ffffff" />
						<stop offset="1" stopColor="#d6d6d6" />
					</linearGradient>
					<radialGradient id="gSphere" cx=".5" cy=".4" r=".65">
						<stop offset="0" stopColor="#f0f0f0" />
						<stop offset=".6" stopColor="#9a9a9a" />
						<stop offset="1" stopColor="#3c3c3c" />
					</radialGradient>
					<radialGradient id="gBlue" cx=".4" cy=".3" r=".7">
						<stop offset="0" stopColor="#9cb8f0" />
						<stop offset=".55" stopColor="#2c54c0" />
						<stop offset="1" stopColor="#0e2470" />
					</radialGradient>
					<linearGradient id="gTeal" x1="0" y1="0" x2="1" y2="1">
						<stop offset="0" stopColor="#60c0c8" />
						<stop offset="1" stopColor="#1d4f78" />
					</linearGradient>
				</defs>
			</svg>

			<div className="h-[29px] shrink-0 flex items-center bg-[#f3f3f3]">
				<svg viewBox="0 0 24 24" className="w-[22px] h-[22px] ml-[1px]">
					<rect width="24" height="24" fill="#202020" />
					<path d="M3 6l6-4 2 8 8-7-3 9 6 4-9-1-3 7-1-8-7 2z" fill="#dcdcdc" />
				</svg>
				<span className="ml-[5px] text-[#222]">Rhino 7 Commercial</span>
				<div className="ml-auto flex items-center">
					<div className="w-[57px] flex justify-center"><span className="w-[11px] h-[1px] bg-[#222]" /></div>
					<div className="w-[60px] flex justify-center">
						<svg viewBox="0 0 12 12" className="w-[12px] h-[12px]" fill="none" stroke="#222">
							<path d="M2.500 3.500h7v7h-7zM4.500 3.500v-2h6v7h-1" />
						</svg>
					</div>
					<div className="w-[62px] flex justify-center">
						<svg viewBox="0 0 12 12" className="w-[14px] h-[14px]" fill="none" stroke="#222">
							<path d="M1 1l10 10M11 1L1 11" />
						</svg>
					</div>
				</div>
			</div>

			<div className="h-[23px] shrink-0 flex items-center pt-[1px] bg-white text-[#222]">
				{menus.map((m) => (
					<span key={m} className="px-[9px]">{m}</span>
				))}
			</div>

			{/* command history and prompt; the top line of the history runs up under the menu */}
			<div className="relative h-[109px] shrink-0 flex pl-[6px]">
				<div className="flex-1 flex flex-col min-w-0 text-[22px] leading-[31px] tracking-[0px] text-[#111]">
					<div className="h-[74px] overflow-hidden border-b-2 border-[#c9c9c9] pl-[4px] bg-[linear-gradient(#f3f3f4_5px,#ffffff_5px)]">
						<div className="-mt-[18px]">Press Control to extrude, tap Alt to make a duplicate</div>
						<div>Command: _Undo</div>
						<div>Undoing Gumball move</div>
					</div>
					<div className="flex-1 flex items-center pl-[4px] bg-white font-bold text-black tracking-[-0.4px]">Command:</div>
				</div>
				<div className="w-[20px] shrink-0 flex flex-col">
					<div className="h-[74px] flex justify-center bg-[linear-gradient(#f1f1f2_5px,#f5f5f5_5px)] pt-[32px]">
						<span className="w-[6px] h-[21px] bg-[#8a8a8a]" />
					</div>
					<div className="mt-[2px] h-[16px] flex items-center justify-center border border-[#a8a8a8] bg-[#efefef]">
						<span className="w-0 h-0 border-x-[4px] border-x-transparent border-b-[6px] border-b-[#111]" />
					</div>
					<div className="h-[16px] flex items-center justify-center border border-[#a8a8a8] bg-[#efefef]">
						<span className="w-0 h-0 border-x-[4px] border-x-transparent border-t-[6px] border-t-[#111]" />
					</div>
				</div>
				<span className="absolute left-[127px] top-[67px] w-[6px] h-[7px] rounded-full bg-[#c44fd8]" />
				<span className="absolute left-[127px] top-[107px] w-[7px] h-[8px] rounded-full bg-[#c97ae0]" />
			</div>

			{/* toolbar tabs */}
			<div className="mt-[4px] h-[27px] shrink-0 flex items-end pl-[8px] border-b border-[#cfd2d6] text-[#444] tracking-[-0.35px]">
				{tabs.map((t, i) => (
					<span
						key={t}
						className={`h-[27px] flex items-center pt-[7px] px-[15px] ${i === 0 ? "border border-b-0 border-[#cfd2d6] rounded-t-[2px] bg-[#f2f3f4] -mb-[1px]" : ""}`}
					>
						{t}
					</span>
				))}
				<svg viewBox="0 0 16 16" className="ml-auto mr-[3px] mb-[4px] w-[16px] h-[16px]" fill="none" stroke="#a8adb3" strokeWidth="1.500">
					<path d="M8 1l2 2h3v3l2 2-2 2v3h-3l-2 2-2-2H3v-3L1 8l2-2V3h3z" />
					<circle cx="8" cy="8" r="2" />
				</svg>
			</div>

			<div className="h-[34px] shrink-0 flex items-center pl-[8px]">
				{topTools.map((t, i) => (
					<Tool key={i} fly={t.fly} cls={t.cls}>{t.el}</Tool>
				))}
			</div>
			<div className="h-[7px] shrink-0" />

			<div className="h-[791px] shrink-0 flex">
				{/* left command palette */}
				<div className="w-[66px] shrink-0 pl-[1px]">
					<div className="mx-[3px] mt-[3px] mb-[3px] h-[1px] bg-[#cfd2d6]" />
					<div className="grid grid-cols-[28px_28px] gap-x-[1px] auto-rows-[28px] w-[57px]">
						{leftTools.map((t, i) => (
							<Tool key={i} fly={t.fly}>{t.el}</Tool>
						))}
					</div>
				</div>

				{/* viewports */}
				<div className="w-[1335px] shrink-0 flex flex-col">
					<div className="grid grid-cols-[665px_665px] grid-rows-[375px_375px] gap-x-[5px] gap-y-[5px]">
						<div className="relative bg-[#9ba1ab] overflow-hidden"><TopView /><Label text="Top" on sep="pr-[5px]" /></div>
						<div className="relative bg-[#9ba1ab] overflow-hidden"><PerspectiveView /><Label text="Perspective" sep="pr-[6px] text-[#5c6169]" /></div>
						<div className="relative bg-[#9ba1ab] overflow-hidden"><FrontView /><Label text="Front" sep="pr-[6px]" /></div>
						<div className="relative bg-[#9ba1ab] overflow-hidden"><RightView /><Label text="Right" sep="pr-[8px]" /></div>
					</div>
					<div className="h-[32px] flex items-center pl-[3px] text-[#444]">
						<span className="px-[9px]">Perspective</span>
						<span className="px-[9px] mx-[4px] h-[26px] flex items-center border-b border-r border-[#c4c8cc] rounded-br-[3px] bg-[#f4f5f6]">Top</span>
						<span className="px-[9px]">Front</span>
						<span className="px-[9px] ml-[3px]">Right</span>
						<svg viewBox="0 0 12 12" className="ml-[9px] w-[12px] h-[12px]" fill="none" stroke="#9a9da2">
							<path d="M4.500 1h3v3.500H11v3H7.500V11h-3V7.500H1v-3h3.500z" />
						</svg>
					</div>
				</div>

				{/* layers panel */}
				<div className="ml-[10px] w-[509px] flex flex-col h-[780px]">
					<div className="h-[23px] flex items-center pl-[3px] text-[#444]">
						Layers
						<span className="ml-[7px] flex-1 h-[3px] border-y border-[#d6d9dd]" />
					</div>
					<div className="relative h-[27px] flex items-center pt-[1px]">
						{panelTabs.map((el, i) => (
							<div
								key={i}
								className={`w-[44px] h-[27px] flex items-center justify-center ${i === 0 ? "ml-[-2px]" : ""} ${i === 1 ? "border border-b-0 border-[#cdd0d4] bg-[#f2f3f5]" : ""}`}
							>
								<Icon>{el}</Icon>
							</div>
						))}
						<svg viewBox="0 0 20 20" className="absolute right-[1px] top-[6px] w-[20px] h-[20px]" fill="none" stroke="#c8cbcf" strokeWidth="2">
							<path d="M10 1l2 3h3l1 3 3 3-3 3-1 3h-3l-2 3-2-3H5l-1-3-3-3 3-3 1-3h3z" />
							<circle cx="10" cy="10" r="2.500" />
						</svg>
					</div>
					<div className="flex-1 flex flex-col min-h-0 border border-t-[#cdd0d4] border-[#d3d6da] bg-[#f1f2f4]">
						<div className="h-[45px] shrink-0 flex items-center pt-[4px] pl-[6px] border-b border-[#d0d3d7]">
							{panelTools.map((t, i) => (
								<div key={i} className="relative w-[26px] h-[26px] flex items-center justify-center">
									<Icon>{t.el}</Icon>
									{t.fly && (
										<span className="absolute right-[-2px] bottom-[0px] w-0 h-0 border-l-[5px] border-l-transparent border-b-[5px] border-b-[#333]" />
									)}
								</div>
							))}
						</div>
						<div className="flex-1 min-h-0 bg-white text-[#555] tracking-[-0.2px]">
							<div className="h-[28px] grid grid-cols-[66px_176px_138px_32px_33px_57px] items-center">
								<span className="pl-[9px] border-r border-[#e2e2e2] h-[26px] leading-[26px]">Current</span>
								<span className="pl-[6px] border-r border-[#e2e2e2] h-[26px] leading-[26px]">Layer</span>
								<span className="text-center border-r border-[#e2e2e2] h-[26px] leading-[26px]">On</span>
								<span className="pl-[9px] border-r border-[#e2e2e2] h-[26px] leading-[26px]">L...</span>
								<span className="pl-[8px] border-r border-[#e2e2e2] h-[26px] leading-[26px]">C...</span>
								<span className="pl-[6px] overflow-hidden whitespace-nowrap h-[26px] leading-[26px]">Material</span>
							</div>
							{layers.map((l) => (
								<div
									key={l.name}
									className={`h-[24px] grid grid-cols-[66px_176px_138px_32px_33px_57px] w-[502px] items-center border-b ${
										l.current ? "bg-[#7f9ee6] border-[#7f9ee6] text-[#1c2c58] font-bold" : "border-[#f0f0f0]"
									}`}
								>
									<span className="flex justify-center">
										{l.current && (
											<svg viewBox="0 0 16 16" className="w-[16px] h-[16px]" fill="none" stroke="#111" strokeWidth="1.300">
												<path d="M1 9l5 5L15 3" />
											</svg>
										)}
									</span>
									<span className="pl-[10px]">{l.name}</span>
									<span className="flex justify-center">
										{!l.current && (
											<svg viewBox="0 0 24 24" className="w-[18px] h-[18px]">
												{l.off ? bulb("#6e94de", "#2d4c90") : bulb("#f7e77a", "#5e5526")}
											</svg>
										)}
									</span>
									<span className="flex justify-center">
										{!l.current && (
											<svg viewBox="0 0 24 24" className="w-[18px] h-[18px]">{openLock}</svg>
										)}
									</span>
									<span className="flex justify-center">
										<span className={`w-[18px] h-[18px] border ${l.current ? "border-white" : "border-[#555]"} ${l.color}`} />
									</span>
									<span className="flex items-center pl-[4px] font-normal text-[#555]">
										{l.current && <span className="w-[18px] h-[18px] rounded-full bg-white shrink-0" />}
										{l.mat && (
											<>
												<span className="w-[18px] h-[18px] rounded-full bg-[#bdbdbd] border border-[#555] shrink-0" />
												<span className="ml-[6px]">{l.mat}</span>
											</>
										)}
									</span>
								</div>
							))}
						</div>
						<div className="h-[20px] shrink-0 flex items-center pl-[21px]">
							<span className="w-[254px] h-[6px] bg-[#8a8a8a]" />
						</div>
					</div>
				</div>
			</div>

			<div className="h-[26px] shrink-0 flex items-center pl-[12px] text-[#444]">
				{osnaps.map((o) => (
					<span key={o.t} className={`flex items-center shrink-0 ${o.w}`}>
						<span
							className={`w-[16px] h-[16px] rounded-[4px] border flex items-center justify-center shrink-0 ${
								o.on ? "bg-[#1d5fb4] border-[#1d5fb4]" : o.dim ? "bg-[#f6f6f6] border-[#dddddd]" : "bg-[#fafafa] border-[#555]"
							}`}
						>
							{o.on && (
								<svg viewBox="0 0 12 12" className="w-[10px] h-[10px]" fill="none" stroke="#fff" strokeWidth="1">
									<path d="M2 6l3 3 5-6" />
								</svg>
							)}
						</span>
						<span className="ml-[4px]">{o.t}</span>
					</span>
				))}
			</div>

			<div className="h-[28px] shrink-0 flex items-stretch border-y border-[#d0d3d7] text-[#333]">
				{status.map((s) => (
					<span
						key={s.t}
						className={`shrink-0 flex items-center justify-center pt-[3px] border-r border-[#d0d3d7] ${s.w} ${
							s.on ? "bg-[#d7e2f0] font-bold" : ""
						}`}
					>
						{s.t}
					</span>
				))}
				<span className="w-[208px] shrink-0 flex items-center border-r border-[#d0d3d7]">
					<span className="ml-[6px] w-[21px] h-[22px] bg-[#2222ee]" />
					<span className="ml-[3px] pt-[3px]">Surface</span>
				</span>
				{status2.map((s) => (
					<span
						key={s.t}
						className={`shrink-0 flex items-center justify-center pt-[3px] ${s.w} ${
							s.t === "Record History" || s.t === "Filter" ? "border-r border-[#d0d3d7]" : ""
						} ${s.on ? "bg-gradient-to-b from-[#cfdcf0] to-[#c7d6ec] font-bold text-[#222]" : ""}`}
					>
						{s.t}
					</span>
				))}
				<span className="pl-[2px] pt-[3px] flex items-center">Available physical memory: 50264 MB</span>
			</div>
		</div>
	);
}
